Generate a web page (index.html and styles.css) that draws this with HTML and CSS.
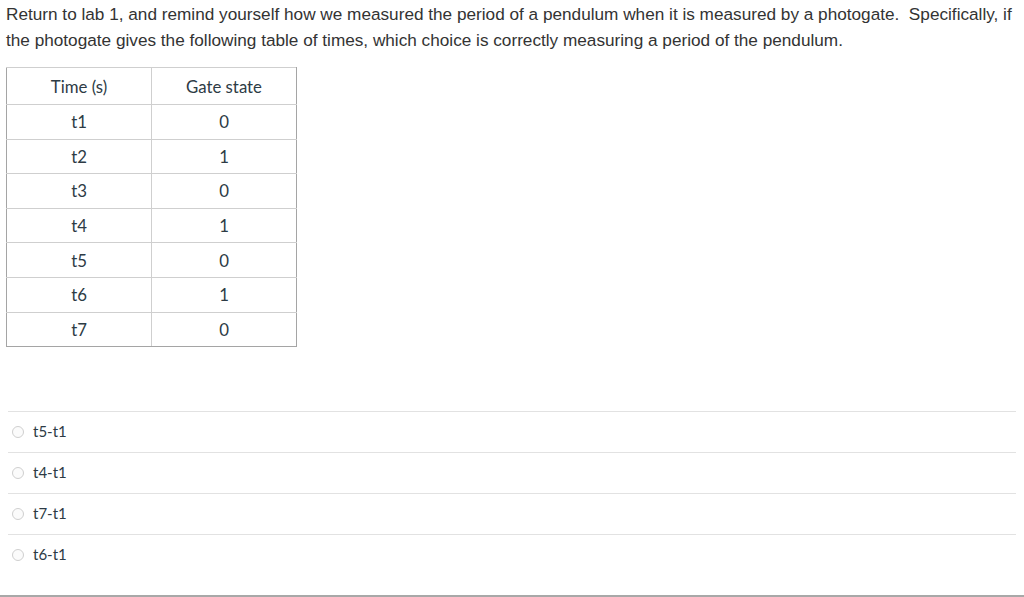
FILE: index.html
```html
<!DOCTYPE html>
<html>
<head>
<meta charset="utf-8">
<link rel="stylesheet" href="styles.css">
</head>
<body>
<div class="page">
  <p class="question">Return to lab 1, and remind yourself how we measured the period of a pendulum when it is measured by a photogate.&nbsp; Specifically, if the photogate gives the following table of times, which choice is correctly measuring a period of the pendulum.</p>
  <table class="times">
    <thead>
      <tr><th>Time (s)</th><th>Gate state</th></tr>
    </thead>
    <tbody>
      <tr><td>t1</td><td>0</td></tr>
      <tr><td>t2</td><td>1</td></tr>
      <tr><td>t3</td><td>0</td></tr>
      <tr><td>t4</td><td>1</td></tr>
      <tr><td>t5</td><td>0</td></tr>
      <tr><td>t6</td><td>1</td></tr>
      <tr><td>t7</td><td>0</td></tr>
    </tbody>
  </table>
  <ul class="choices">
    <li class="choice"><span class="radio"></span><span class="label">t5-t1</span></li>
    <li class="choice"><span class="radio"></span><span class="label">t4-t1</span></li>
    <li class="choice"><span class="radio"></span><span class="label">t7-t1</span></li>
    <li class="choice"><span class="radio"></span><span class="label">t6-t1</span></li>
  </ul>
</div>
<div class="bottom-rule"></div>
</body>
</html>
```

FILE: styles.css
```css
html, body {
  margin: 0;
  padding: 0;
  background: #ffffff;
}
body {
  height: 597px;
  display: flex;
  flex-direction: column;
  overflow: hidden;
}
.page {
  flex: 1;
  padding: 0 6px 0 6px;
}
.question {
  margin: 0;
  padding-top: 1px;
  font-family: "Liberation Sans", Arial, sans-serif;
  font-size: 17.2px;
  line-height: 26px;
  color: #333333;
}
.times {
  margin-top: 14px;
  border-collapse: collapse;
  font-family: Lato, sans-serif;
  font-size: 16.8px;
  color: #2d3b45;
  border: 1px solid #a5a5a5;
}
.times th, .times td {
  width: 144px;
  text-align: center;
  border: 1px solid #cfcfcf;
  font-weight: normal;
  padding: 0;
}
.times th {
  height: 36px;
}
.times td {
  height: 33.6px;
}
.times tr > *:first-child {
  border-left: 1px solid #a5a5a5;
}
.times tr > *:last-child {
  border-right: 1px solid #a5a5a5;
}
.times tbody tr:last-child td {
  border-bottom: 1px solid #a5a5a5;
}
.choices {
  list-style: none;
  margin: 64px 2px 0 2px;
  padding: 0;
}
.choice {
  display: flex;
  align-items: center;
  height: 40px;
  border-top: 1px solid #e2e2e2;
  font-family: Lato, sans-serif;
  font-size: 15px;
  color: #2d3b45;
}
.radio {
  width: 12px;
  height: 12px;
  border: 1px solid #cfcfcf;
  border-radius: 50%;
  margin: 0 9px 0 4px;
  box-sizing: border-box;
  background: #fbfbfb;
}
.label {
  line-height: 20px;
  margin-top: -2px;
}
.bottom-rule {
  height: 2px;
  background: #a8a8a8;
  flex: none;
}
```
